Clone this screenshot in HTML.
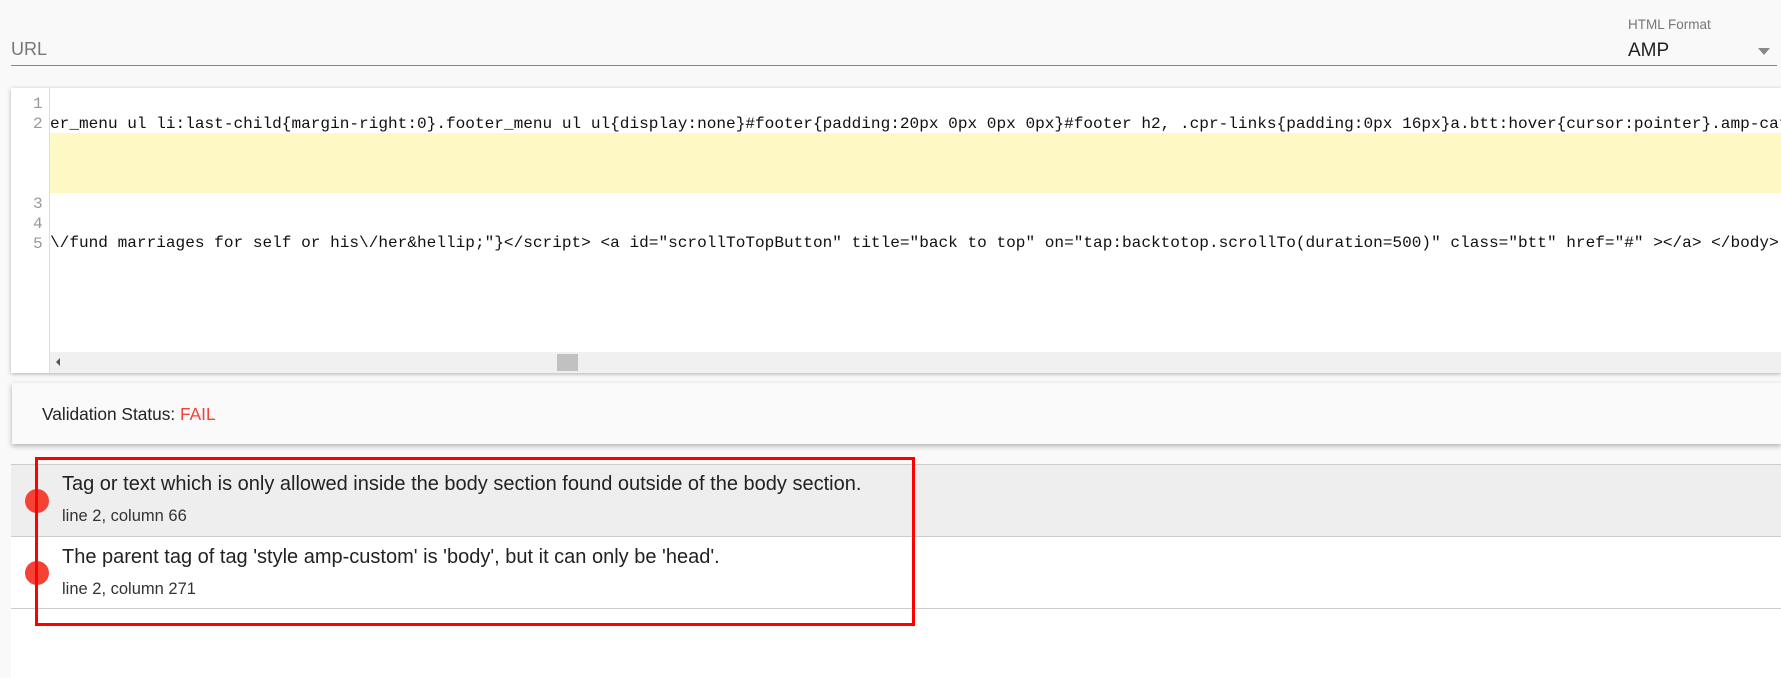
<!DOCTYPE html>
<html><head><meta charset="utf-8"><style>
body{margin:0;width:1781px;height:678px;background:#f9f9f9;font-family:"Liberation Sans",sans-serif;position:relative;overflow:hidden;color:#222}
.a{position:absolute}
.code{font-family:"Liberation Mono",monospace;font-size:16.1px;white-space:pre;color:#111}
</style></head><body>
<div class="a" style="left:11px;top:39px;font-size:18px;color:#777">URL</div>
<div class="a" style="left:11px;top:65px;width:1766px;height:1px;background:#888"></div>
<div class="a" style="left:1628px;top:17px;font-size:13.5px;color:#777">HTML Format</div>
<div class="a" style="left:1628px;top:40px;font-size:19px;color:#222">AMP</div>
<div class="a" style="left:1758px;top:48px;width:0;height:0;border-left:6px solid transparent;border-right:6px solid transparent;border-top:7px solid #888"></div>

<div class="a" style="left:11px;top:88px;width:1770px;height:285px;background:#fff;box-shadow:0 1px 4px rgba(0,0,0,.3);overflow:hidden">
  <div class="a" style="left:0;top:0;width:38px;height:285px;background:#fff;border-right:1px solid #ddd"></div>
  <div class="a" style="left:39px;top:45px;width:1731px;height:60px;background:#fef8c5"></div>
  <div class="a code" style="left:22px;top:6px;line-height:20px;color:#999">1
2



3
4
5</div>
  <div class="a code" style="left:39px;top:26px;line-height:20px">er_menu ul li:last-child{margin-right:0}.footer_menu ul ul{display:none}#footer{padding:20px 0px 0px 0px}#footer h2, .cpr-links{padding:0px 16px}a.btt:hover{cursor:pointer}.amp-cat</div>
  <div class="a code" style="left:39px;top:145px;line-height:20px">\/fund marriages for self or his\/her&amp;hellip;"}&lt;/script&gt; &lt;a id="scrollToTopButton" title="back to top" on="tap:backtotop.scrollTo(duration=500)" class="btt" href="#" &gt;&lt;/a&gt; &lt;/body&gt; &lt;</div>
  <div class="a" style="left:39px;top:264px;width:1731px;height:21px;background:#f0f0f0"></div>
  <div class="a" style="left:546px;top:266px;width:21px;height:17px;background:#c1c1c1"></div>
  <div class="a" style="left:45px;top:270px;width:0;height:0;border-top:4px solid transparent;border-bottom:4px solid transparent;border-right:4px solid #555"></div>
</div>

<div class="a" style="left:12px;top:383px;width:1769px;height:61px;background:#fafafa;box-shadow:0 2px 5px rgba(0,0,0,.3)"></div>
<div class="a" style="left:42px;top:404px;font-size:17.3px">Validation Status: <span style="color:#f44336">FAIL</span></div>

<div class="a" style="left:11px;top:464px;width:1770px;height:214px;background:#fff"></div>
<div class="a" style="left:11px;top:464px;width:1770px;height:73px;background:#eee;border-top:1px solid #ccc;border-bottom:1px solid #ccc;box-sizing:border-box"></div>
<div class="a" style="left:11px;top:608px;width:1770px;height:1px;background:#ccc"></div>
<div class="a" style="left:25px;top:489px;width:24px;height:24px;border-radius:50%;background:#f44336"></div>
<div class="a" style="left:25px;top:561px;width:24px;height:24px;border-radius:50%;background:#f44336"></div>
<div class="a" style="left:62px;top:473px;font-size:20px;color:#222">Tag or text which is only allowed inside the body section found outside of the body section.</div>
<div class="a" style="left:62px;top:507px;font-size:16.5px;color:#333">line 2, column 66</div>
<div class="a" style="left:62px;top:546px;font-size:20px;color:#222">The parent tag of tag 'style amp-custom' is 'body', but it can only be 'head'.</div>
<div class="a" style="left:62px;top:580px;font-size:16.5px;color:#333">line 2, column 271</div>
<div class="a" style="left:35px;top:457px;width:880px;height:169px;border:3px solid #f00;box-sizing:border-box"></div>
</body></html>
